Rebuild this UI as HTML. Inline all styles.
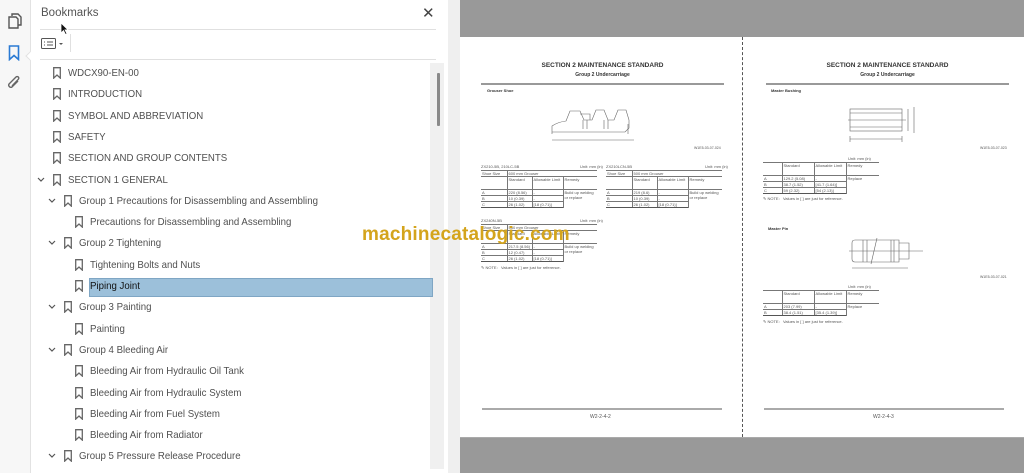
<!DOCTYPE html>
<html><head><meta charset="utf-8"><style>
*{margin:0;padding:0;box-sizing:border-box}
body{width:1024px;height:473px;overflow:hidden;position:relative;background:#fff;font-family:"Liberation Sans",sans-serif}
.abs{position:absolute}
#tool{left:0;top:0;width:31px;height:473px;background:#f7f7f7;border-right:1px solid #e2e2e2}
#panel{left:31px;top:0;width:417px;height:473px;background:#fff}
.row{position:absolute;height:20px;font-size:10.5px;color:#505050;line-height:20px;white-space:nowrap}
.row span{transform:scaleX(0.92);transform-origin:0 50%}
.bm{position:absolute;width:8px;height:12px;top:4px}
table{border-collapse:collapse;position:absolute;font-size:4px;color:#555;font-family:"Liberation Sans",sans-serif}
td{border-top:0.6px solid #777;padding:0 1px;vertical-align:top;height:5.5px;line-height:5px}
td+td{border-left:0.6px solid #777}
tr:last-child td{border-bottom:0.8px solid #555}
.t{font-size:4px;color:#555;position:absolute;white-space:nowrap}
.h{font-size:6.5px;font-weight:bold;color:#333;position:absolute;white-space:nowrap;text-align:center}
</style></head><body>
<div class="abs" id="tool">
<svg class="abs" style="left:7px;top:12px" width="16" height="18" viewBox="0 0 16 18" fill="none" stroke="#555" stroke-width="1.4"><path d="M5 4V2h6l3 3v8h-3"/><path d="M2 5h7l2 2v9H2z"/></svg>
<svg class="abs" style="left:8px;top:45px" width="12" height="16" viewBox="0 0 12 16" fill="none" stroke="#2a7ad4" stroke-width="1.6"><path d="M1.5 1h9v13.5L6 10.5 1.5 14.5z"/></svg>
<svg class="abs" style="left:6px;top:75px" width="16" height="16" viewBox="0 0 16 16" fill="none" stroke="#666" stroke-width="1.4"><path d="M12 6l-6 6a2.2 2.2 0 01-3-3l7-7a1.6 1.6 0 012.3 2.3L6 11"/></svg>
<div class="abs" style="left:27px;top:52px;width:8px;height:8px;background:#fff;border-left:1px solid #e2e2e2;border-bottom:1px solid #e2e2e2;transform:rotate(45deg)"></div>
</div>
<div class="abs" id="panel">
<div class="abs" style="left:10px;top:7px;font-size:11.5px;color:#555">Bookmarks</div>
<div class="abs" style="left:391px;top:4px;font-size:15px;color:#444">✕</div>
<div class="abs" style="left:9px;top:29px;width:396px;height:1px;background:#e0e0e0"></div>
<svg class="abs" style="left:10px;top:38px" width="24" height="12" viewBox="0 0 24 12" fill="none" stroke="#555" stroke-width="1"><rect x="0.5" y="0.5" width="14" height="10" rx="1"/><path d="M3 4h1M6 4h6M3 7h1M6 7h6"/><path d="M18 5h4l-2 2z" fill="#555" stroke="none"/></svg>
<div class="abs" style="left:39px;top:34px;width:1px;height:18px;background:#e0e0e0"></div>
<div class="abs" style="left:9px;top:59px;width:396px;height:1px;background:#e0e0e0"></div>
<div class="abs" style="left:399px;top:63px;width:14px;height:406px;background:#f0f0f0"></div>
<div class="abs" style="left:406px;top:73px;width:3px;height:53px;background:#8a8a8a;border-radius:1px"></div>
</div>
<div class="abs" style="left:448px;top:0;width:12px;height:473px;background:#efefef"></div>

<div class="abs" style="left:89px;top:278px;width:344px;height:19px;background:#9cc0da;border:1px solid #7fa6c4"></div>
<div id="rows"></div>

<div class="abs" style="left:460px;top:0;width:564px;height:37px;background:#999"></div>
<div class="abs" style="left:460px;top:437px;width:564px;height:36px;background:#999;border-top:1px solid #aaa"></div>
<div class="abs" style="left:742px;top:37px;width:0;height:400px;border-left:1px dashed #555"></div>

<div class="h" style="left:481px;width:243px;top:62px">SECTION 2 MAINTENANCE STANDARD</div>
<div class="h" style="left:481px;width:243px;top:72px;font-size:5px">Group 2 Undercarriage</div>
<div class="h" style="left:766px;width:243px;top:62px">SECTION 2 MAINTENANCE STANDARD</div>
<div class="h" style="left:766px;width:243px;top:72px;font-size:5px">Group 2 Undercarriage</div>
<div class="abs" style="left:481px;top:83px;width:243px;height:2px;background:#999"></div>
<div class="abs" style="left:766px;top:83px;width:243px;height:2px;background:#999"></div>
<div class="t" style="left:487px;top:88px;font-weight:bold;color:#333">Grouser Shoe</div>
<div class="t" style="left:771px;top:88px;font-weight:bold;color:#333">Master Bushing</div>
<div class="t" style="left:768px;top:226px;font-weight:bold;color:#333">Master Pin</div>

<svg class="abs" style="left:548px;top:108px" width="95" height="36" viewBox="0 0 95 36" fill="none" stroke="#666" stroke-width="0.6"><path d="M4 26L4 18Q10 14 18 13L22 3h10l4 9h8l4-10h8l4 10h6l4-10h8l3 10v8l-4 4H4"/><path d="M32 6h10v6M35 12v9M39 12v9M56 12v9M60 12v9M4 32h82M80 16v10"/></svg>
<div class="t" style="left:694px;top:146px;font-size:3.5px">W1E5-03-07-024</div>
<svg class="abs" style="left:848px;top:106px" width="70" height="40" viewBox="0 0 70 40" fill="none" stroke="#666" stroke-width="0.6"><rect x="2" y="3" width="52" height="22"/><path d="M2 7h52M2 21h52M0 14h58"/><path d="M60 3v22M66 1v26M2 30v6M54 30v6M2 33h52"/></svg>
<div class="t" style="left:980px;top:146px;font-size:3.5px">W1E5-03-07-023</div>
<svg class="abs" style="left:849px;top:238px" width="74" height="36" viewBox="0 0 74 36" fill="none" stroke="#666" stroke-width="0.6"><path d="M6 2h44v22H6q-3 0-3-3V5q0-3 3-3zM50 5h10v16H50M14 2v22M18 2v22M42 2v22M45 2v22M0 13h74M22 26L28 0M3 30h56"/></svg>
<div class="t" style="left:980px;top:275px;font-size:3.5px">W1E5-03-07-021</div>

<div class="t" style="left:481px;top:164px">ZX210-5B, 210LC-5B</div><div class="t" style="left:580px;top:164px">Unit: mm (in)</div>
<div class="t" style="left:606px;top:164px">ZX210LCN-5B</div><div class="t" style="left:705px;top:164px">Unit: mm (in)</div>
<div class="t" style="left:481px;top:218px">ZX240N-5B</div><div class="t" style="left:580px;top:218px">Unit: mm (in)</div>
<div class="t" style="left:848px;top:156px">Unit: mm (in)</div>
<div class="t" style="left:848px;top:284px">Unit: mm (in)</div>

<table style="left:481px;top:170px;width:116px"><tr><td style="width:26px">Shoe Size</td><td colspan="3">600 mm Grouser</td></tr><tr><td style="height:13px"></td><td style="width:25px">Standard</td><td style="width:31px">Allowable Limit</td><td>Remedy</td></tr><tr><td>A</td><td>220 (8.56)</td><td>-</td><td rowspan="3">Build up welding or replace</td></tr><tr><td>B</td><td>10 (0.39)</td><td>-</td></tr><tr><td>C</td><td>26 (1.02)</td><td>[18 (0.71)]</td></tr></table>
<table style="left:606px;top:170px;width:116px"><tr><td style="width:26px">Shoe Size</td><td colspan="3">500 mm Grouser</td></tr><tr><td style="height:13px"></td><td style="width:25px">Standard</td><td style="width:31px">Allowable Limit</td><td>Remedy</td></tr><tr><td>A</td><td>219 (8.6)</td><td>-</td><td rowspan="3">Build up welding or replace</td></tr><tr><td>B</td><td>10 (0.39)</td><td>-</td></tr><tr><td>C</td><td>26 (1.02)</td><td>[18 (0.71)]</td></tr></table>
<table style="left:481px;top:224px;width:116px"><tr><td style="width:26px">Shoe Size</td><td colspan="3">550 mm Grouser</td></tr><tr><td style="height:13px"></td><td style="width:25px">Standard</td><td style="width:31px">Allowable Limit</td><td>Remedy</td></tr><tr><td>A</td><td>217.5 (8.56)</td><td>-</td><td rowspan="3">Build up welding or replace</td></tr><tr><td>B</td><td>12 (0.47)</td><td>-</td></tr><tr><td>C</td><td>26 (1.02)</td><td>[18 (0.71)]</td></tr></table>
<div class="t" style="left:481px;top:265px">✎ NOTE:&nbsp;&nbsp;&nbsp;Values in [ ] are just for reference.</div>

<table style="left:763px;top:162px;width:116px"><tr><td style="width:19px;height:13px"></td><td style="width:32px">Standard</td><td style="width:32px">Allowable Limit</td><td>Remedy</td></tr><tr><td>A</td><td>129.2 (5.08)</td><td>-</td><td rowspan="3">Replace</td></tr><tr><td>B</td><td>38.7 (1.52)</td><td>[41.7 (1.64)]</td></tr><tr><td>C</td><td>59 (2.32)</td><td>[54 (2.13)]</td></tr></table>
<div class="t" style="left:763px;top:196px">✎ NOTE:&nbsp;&nbsp;&nbsp;Values in [ ] are just for reference.</div>
<table style="left:763px;top:290px;width:116px"><tr><td style="width:19px;height:13px"></td><td style="width:32px">Standard</td><td style="width:32px">Allowable Limit</td><td>Remedy</td></tr><tr><td>A</td><td>203 (7.99)</td><td>-</td><td rowspan="2">Replace</td></tr><tr><td>B</td><td>38.4 (1.51)</td><td>[35.4 (1.39)]</td></tr></table>
<div class="t" style="left:763px;top:319px">✎ NOTE:&nbsp;&nbsp;&nbsp;Values in [ ] are just for reference.</div>

<div class="abs" style="left:482px;top:408px;width:240px;height:2px;background:#aaa"></div>
<div class="abs" style="left:764px;top:408px;width:240px;height:2px;background:#aaa"></div>
<div class="t" style="left:590px;top:414px;font-size:5px">W2-2-4-2</div>
<div class="t" style="left:873px;top:414px;font-size:5px">W2-2-4-3</div>

<div class="abs" style="left:362px;top:224px;font-size:19px;font-weight:bold;color:#d4a41c;letter-spacing:0.2px">machinecatalogic.com</div>

<svg class="abs" style="left:60px;top:22px" width="10" height="14" viewBox="0 0 10 14"><path d="M1 1v10l2.5-2.5 2 4 1.5-.8-2-3.8H8z" fill="#111" stroke="#fff" stroke-width="0.8"/></svg>

<script>
const items=[[0,"WDCX90-EN-00"],[0,"INTRODUCTION"],[0,"SYMBOL AND ABBREVIATION"],[0,"SAFETY"],[0,"SECTION AND GROUP CONTENTS"],[0,"SECTION 1 GENERAL",1],[1,"Group 1 Precautions for Disassembling and Assembling",1],[2,"Precautions for Disassembling and Assembling"],[1,"Group 2 Tightening",1],[2,"Tightening Bolts and Nuts"],[2,"Piping Joint"],[1,"Group 3 Painting",1],[2,"Painting"],[1,"Group 4 Bleeding Air",1],[2,"Bleeding Air from Hydraulic Oil Tank"],[2,"Bleeding Air from Hydraulic System"],[2,"Bleeding Air from Fuel System"],[2,"Bleeding Air from Radiator"],[1,"Group 5 Pressure Release Procedure",1]];
let h="";
items.forEach((it,i)=>{const y=63+i*21.3;const ix=[53,64,75][it[0]];
h+=`<div class="row" style="left:0;top:${y}px;width:440px">`;
if(it[2])h+=`<svg class="abs" style="left:${ix-16}px;top:7px" width="8" height="6" viewBox="0 0 8 6"><path d="M1 1l3 3 3-3" fill="none" stroke="#555" stroke-width="1.2"/></svg>`;
h+=`<svg class="bm" style="left:${ix}px" viewBox="0 0 8 12"><path d="M0.7 0.7h6.6v10.4L4 8 0.7 11.1z" fill="none" stroke="#666" stroke-width="1.3"/></svg>`;
h+=`<span class="abs" style="left:${ix+15}px;${it[1]=="Piping Joint"?"color:#111":""}">${it[1]}</span></div>`;});
document.getElementById("rows").innerHTML=h;
</script>
</body></html>
